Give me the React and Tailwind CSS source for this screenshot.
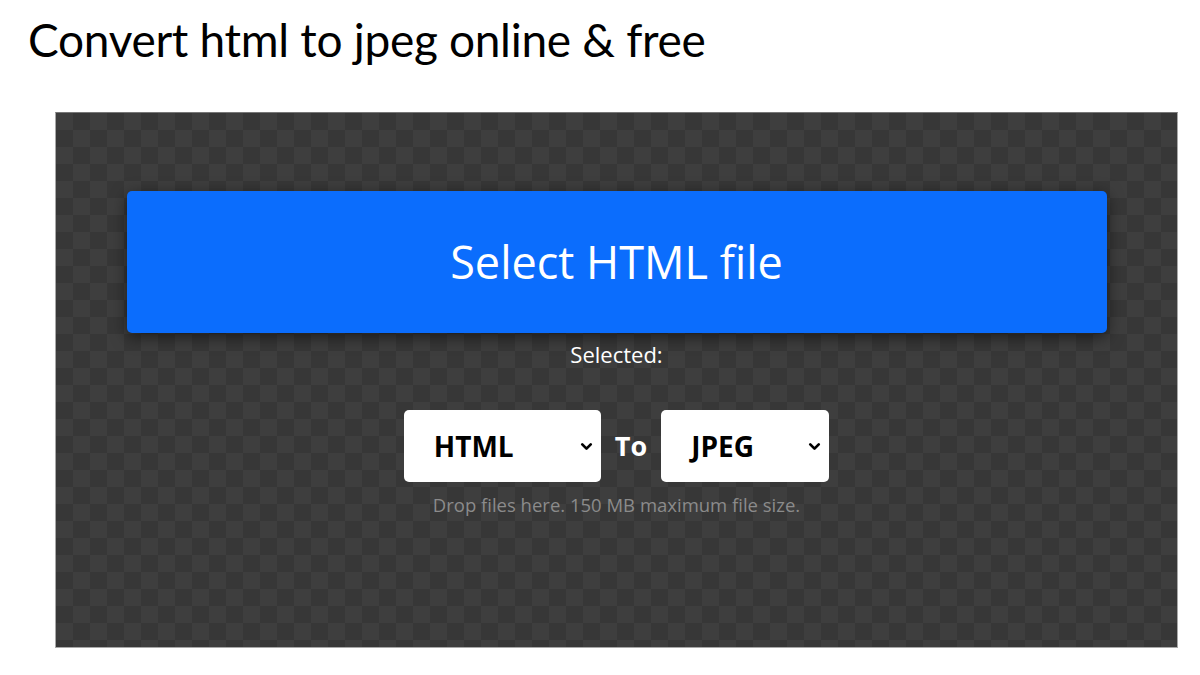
import { ChevronDown } from 'lucide-react';

const SelectBox = ({ label, width }) => (
  <div className={`${width} h-[72px] bg-white rounded-[5px] flex items-center justify-between pl-[30px] pr-[6px]`}>
    <span className="text-[28px] font-bold text-black">{label}</span>
    <ChevronDown className="w-[17px] h-[17px] text-black" strokeWidth={3.8} />
  </div>
);

export default function App() {
  return (
    <div className="w-[1200px] h-[675px] bg-white overflow-hidden" style={{ fontFamily: '"Open Sans", sans-serif' }}>
      <h1 className="pl-[28px] pt-[12px] text-[46px] leading-[56px] text-black tracking-[-0.3px]" style={{ fontFamily: '"Lato", sans-serif' }}>
        Convert html to jpeg online &amp; free
      </h1>

      <div className="ml-[55px] mt-[44px] w-[1123px] h-[536px] border border-[#a8a8a8] border-t-[#777] bg-[#3a3a3a] bg-[repeating-conic-gradient(#373737_0%_25%,#3e3e3e_0%_50%)] bg-[length:34px_34px] flex flex-col items-center pt-[78px]">
        <button className="w-[980px] h-[142px] bg-[#0b6dfd] rounded-[5px] shadow-[0_4px_16px_rgba(0,0,0,0.55)] text-white text-[45px] flex items-center justify-center">
          Select HTML file
        </button>
        <div className="mt-[5px] text-white text-[22px] leading-[32px] font-medium">Selected:</div>
        <div className="mt-[40px] flex items-center gap-[14px]">
          <SelectBox label="HTML" width="w-[197px]" />
          <span className="text-white font-bold text-[27px]">To</span>
          <SelectBox label="JPEG" width="w-[168px]" />
        </div>
        <div className="mt-[9px] text-[#8b8b8b] text-[18.5px] leading-[28px]">
          Drop files here. 150 MB maximum file size.
        </div>
      </div>
    </div>
  );
}
